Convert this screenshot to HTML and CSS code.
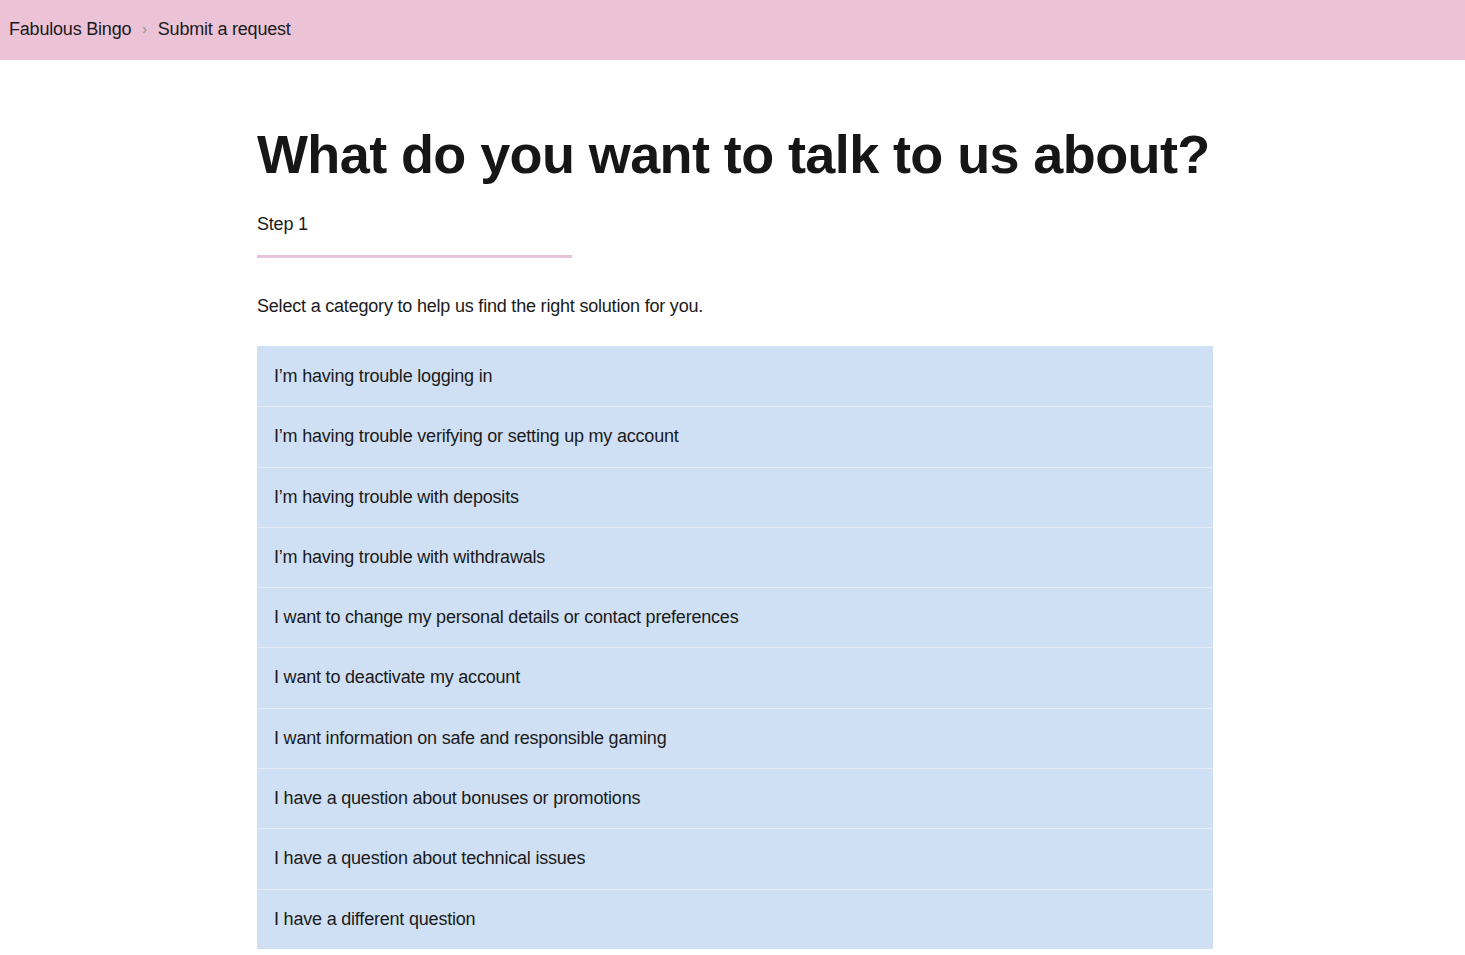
FILE: index.html
```html
<!DOCTYPE html>
<html lang="en">
<head>
<meta charset="utf-8">
<title>Submit a request – Fabulous Bingo</title>
<link rel="stylesheet" href="styles.css">
</head>
<body>
<header class="topbar">
  <nav class="breadcrumbs">
    <a href="#" class="crumb">Fabulous Bingo</a>
    <span class="sep">›</span>
    <a href="#" class="crumb">Submit a request</a>
  </nav>
</header>
<main class="wrap">
  <div class="container">
    <h1 class="title">What do you want to talk to us about?</h1>
    <div class="step">Step 1</div>
    <div class="step-bar"></div>
    <p class="intro">Select a category to help us find the right solution for you.</p>
    <ul class="options">
      <li class="option">I’m having trouble logging in</li>
      <li class="option">I’m having trouble verifying or setting up my account</li>
      <li class="option">I’m having trouble with deposits</li>
      <li class="option">I’m having trouble with withdrawals</li>
      <li class="option">I want to change my personal details or contact preferences</li>
      <li class="option">I want to deactivate my account</li>
      <li class="option">I want information on safe and responsible gaming</li>
      <li class="option">I have a question about bonuses or promotions</li>
      <li class="option">I have a question about technical issues</li>
      <li class="option">I have a different question</li>
    </ul>
  </div>
</main>
</body>
</html>
```
FILE: styles.css
```css
* { box-sizing: border-box; }
html, body { margin: 0; padding: 0; }
body {
  font-family: "Liberation Sans", Arial, sans-serif;
  color: #1a1a1a;
  background: #ffffff;
}
.topbar {
  background: #ecc2d7;
  height: 60px;
  display: flex;
  align-items: center;
  padding-left: 9px;
  padding-bottom: 2px;
}
.breadcrumbs {
  display: flex;
  align-items: center;
  gap: 11px;
  font-size: 18px;
  letter-spacing: -0.2px;
}
.crumb { color: #1a1a1a; text-decoration: none; }
.sep { color: #8a8a8a; font-size: 14px; }
.wrap {
  padding-left: 5px;
}
.container {
  width: 956px;
  margin: 0 auto;
  padding-top: 62px;
}
.title {
  margin: 0;
  font-size: 54px;
  font-weight: bold;
  line-height: 64px;
  letter-spacing: -0.6px;
  white-space: nowrap;
  color: #161616;
}
.step {
  margin-top: 26px;
  font-size: 18px;
  line-height: 24px;
  letter-spacing: -0.2px;
}
.step-bar {
  width: 315px;
  height: 3px;
  background: #e8c4d8;
  margin-top: 19px;
}
.intro {
  margin: 36px 0 0;
  font-size: 18px;
  line-height: 24px;
  letter-spacing: -0.2px;
}
.options {
  list-style: none;
  margin: 28px 0 0;
  padding: 0;
}
.option {
  background: #cfe0f5;
  font-size: 18px;
  line-height: 27px;
  letter-spacing: -0.2px;
  padding: 16px 17px 16.3px;
  border-top: 1px solid #e3ecf8;
}
.option:first-child { border-top: none; padding-top: 17px; }
```
